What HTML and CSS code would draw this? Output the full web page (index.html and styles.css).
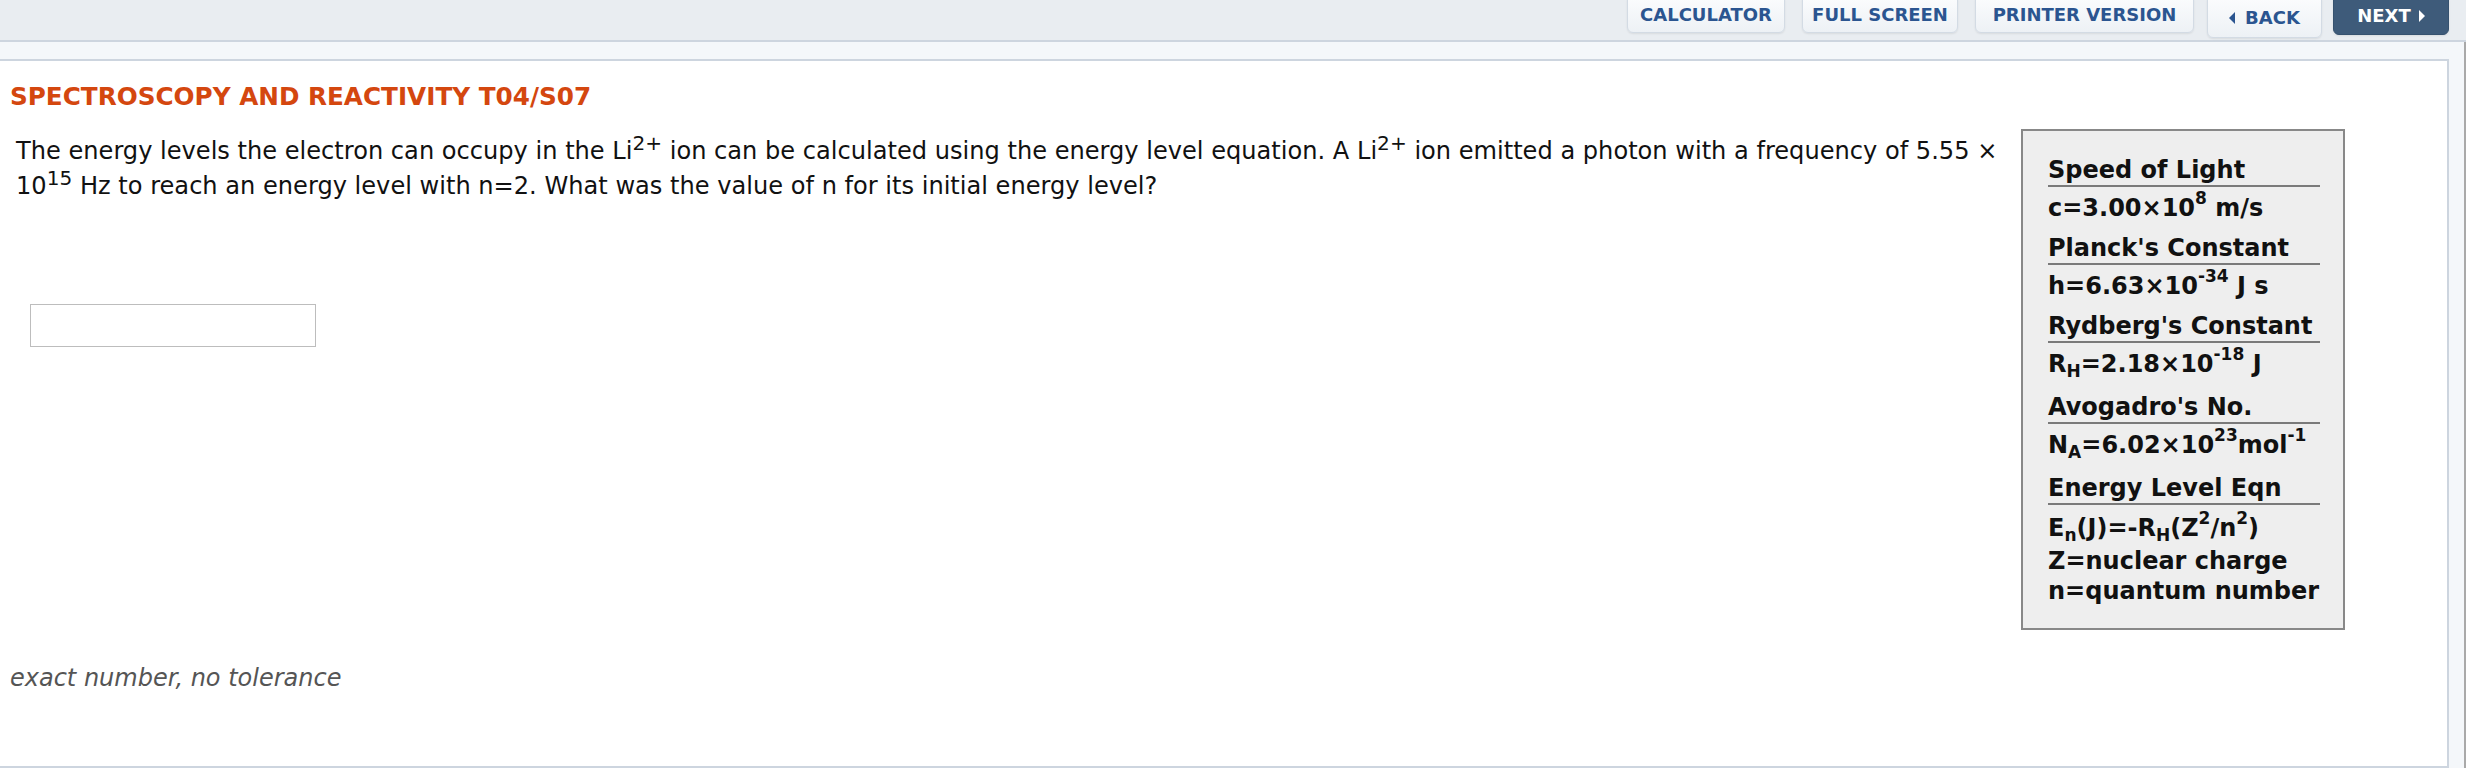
FILE: index.html
```html
<html>

<head>
<meta charset="utf-8">
<title>Spectroscopy and Reactivity T04/S07</title>
<link rel="stylesheet" href="styles.css">
</head>

<body>
	<div class="topbar">
		<a class="btn calc" href="#">CALCULATOR</a>
		<a class="btn full" href="#">FULL SCREEN</a>
		<a class="btn print" href="#">PRINTER VERSION</a>
		<a class="btn back" href="#"><span class="tri-left"></span>BACK</a>
		<a class="btn next" href="#">NEXT<span class="tri-right"></span></a>
	</div>
	<div class="frame">
		<div class="panel">
			<h1 class="title">SPECTROSCOPY AND REACTIVITY T04/S07</h1>
			<div class="question">
				<div class="main">
					<p class="text">The energy levels the electron can occupy in the Li<sup>2+</sup> ion can be calculated using the energy level equation. A Li<sup>2+</sup> ion emitted a photon with a frequency of 5.55 &times; 10<sup>15</sup> Hz to reach an energy level with n=2. What was the value of n for its initial energy level?</p>
					<input class="answer" type="text">
					<p class="note">exact number, no tolerance</p>
				</div>
				<div class="constants">
					<div class="name">Speed of Light</div>
					<div class="val">c=3.00&times;10<sup>8</sup> m/s</div>
					<div class="name">Planck's Constant</div>
					<div class="val">h=6.63&times;10<sup>-34</sup> J s</div>
					<div class="name">Rydberg's Constant</div>
					<div class="val low">R<sub>H</sub>=2.18&times;10<sup>-18</sup> J</div>
					<div class="name">Avogadro's No.</div>
					<div class="val low">N<sub>A</sub>=6.02&times;10<sup>23</sup>mol<sup>-1</sup></div>
					<div class="name">Energy Level Eqn</div>
					<div class="eqn">
						<div class="first">E<sub>n</sub>(J)=-R<sub>H</sub>(Z<sup>2</sup>/n<sup>2</sup>)</div>
						<div>Z=nuclear charge</div>
						<div>n=quantum number</div>
					</div>
				</div>
			</div>
		</div>
	</div>
</body>

</html>
```

FILE: styles.css
```css
body {
	margin: 0;
	font-family: "DejaVu Sans", Verdana, sans-serif;
	color: #111;
	overflow: hidden;
}

.topbar {
	display: flex;
	justify-content: flex-end;
	align-items: flex-start;
	gap: 17px;
	height: 40px;
	padding-right: 17px;
	background-color: #e9edf1;
	border-bottom: 2px solid #cdd5df;
}

.btn {
	display: flex;
	align-items: center;
	justify-content: center;
	height: 39px;
	margin-top: -6px;
	padding-top: 2px;
	box-sizing: border-box;
	font-size: 18px;
	font-weight: bold;
	color: #2b5590;
	text-decoration: none;
	background: linear-gradient(#fcfdfe, #edf1f5);
	border: 1px solid #d3dbe4;
	border-radius: 6px;
	box-shadow: 0 1px 2px rgba(0, 0, 0, 0.08);
}

.calc {
	width: 158px;
}

.full {
	width: 156px;
}

.print {
	width: 219px;
}

.btn.back {
	width: 115px;
	height: 44px;
	padding-top: 3px;
	margin-left: -4px;
}

.btn.next {
	width: 116px;
	height: 41px;
	margin-left: -6px;
	color: white;
	background: #3e5b7a;
	border-color: #36526f;
}

.tri-left {
	width: 0;
	height: 0;
	margin-right: 10px;
	border-top: 6px solid transparent;
	border-bottom: 6px solid transparent;
	border-right: 6px solid #2b5590;
}

.tri-right {
	width: 0;
	height: 0;
	margin-left: 8px;
	border-top: 6px solid transparent;
	border-bottom: 6px solid transparent;
	border-left: 6px solid white;
}

.frame {
	height: 726px;
	box-sizing: border-box;
	padding: 17px 15px 0 0;
	background-color: #f4f7fa;
	border-right: 2px solid #a9a9a9;
}

.panel {
	height: 709px;
	box-sizing: border-box;
	padding: 21px 0 0 10px;
	background-color: white;
	border-top: 2px solid #cdd5df;
	border-right: 2px solid #cdd5df;
	border-bottom: 2px solid #cdd5df;
}

.title {
	margin: 0;
	font-size: 24.7px;
	line-height: 30px;
	color: #d4470f;
}

.question {
	display: flex;
	align-items: flex-start;
}

.main {
	flex: 1;
}

.text {
	margin: 22px 0 0 6px;
	font-size: 24.1px;
	line-height: 35px;
}

.text sup {
	line-height: 0;
}

.answer {
	display: block;
	width: 286px;
	height: 43px;
	box-sizing: border-box;
	margin: 100px 0 0 20px;
	border: 1px solid #bdbdbd;
}

.note {
	margin: 316px 0 0;
	font-size: 24px;
	line-height: 30px;
	font-style: italic;
	color: #555;
}

.constants {
	width: 324px;
	box-sizing: border-box;
	margin: 17px 102px 0 12px;
	padding: 24px 23px 22px 25px;
	background-color: #eee;
	border: 2px solid #888;
	font-size: 24px;
	font-weight: bold;
	line-height: 30px;
}

.constants sup,
.constants sub {
	line-height: 0;
	font-size: 17px;
}

.constants sup {
	vertical-align: 12px;
}

.constants sub {
	vertical-align: -5px;
}

.name {
	border-bottom: 2px solid #7a7a7a;
	margin-bottom: 6px;
}

.val {
	margin-bottom: 10px;
}

.val.low {
	margin-bottom: 13px;
}

.eqn .first {
	padding-top: 2px;
	margin-bottom: 3px;
}
```
